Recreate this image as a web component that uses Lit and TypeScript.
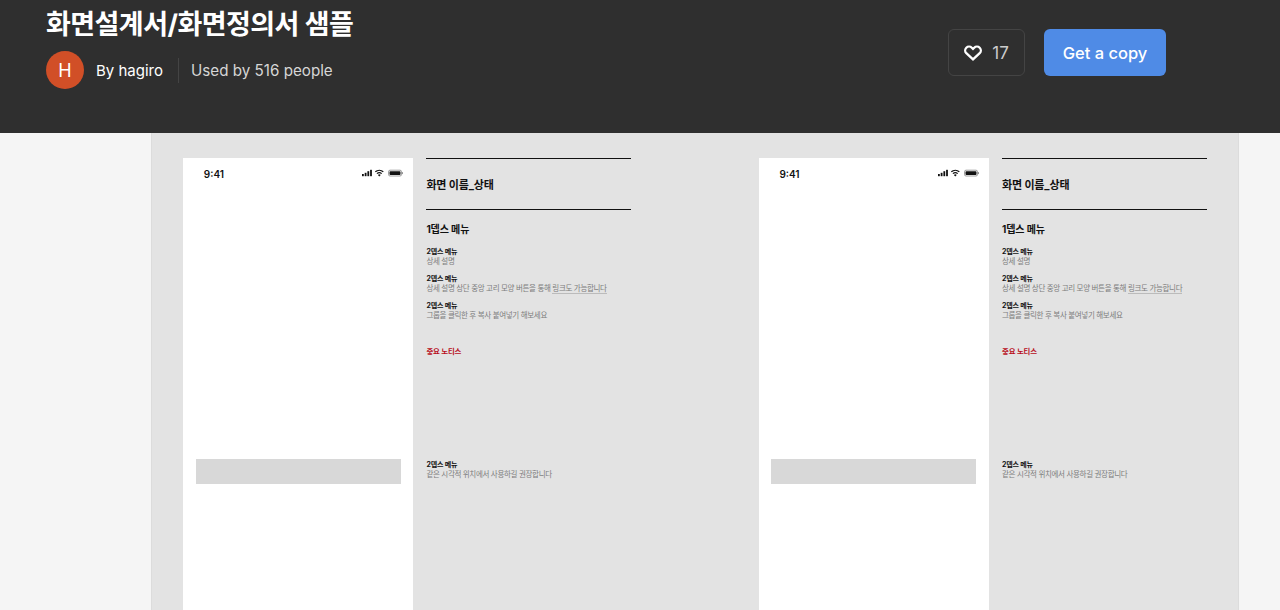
import { LitElement, html, css } from "lit";
import { customElement } from "lit/decorators.js";

@customElement("app-root")
export class AppRoot extends LitElement {
  static styles = css`
    :host { display: block; width: 1280px; height: 610px; overflow: hidden; background: #f5f5f5; font-family: Inter, "Noto Sans CJK KR", sans-serif; }
    .top { height: 133px; box-sizing: border-box; background: #2f2f2f; display: flex; justify-content: space-between; padding: 0 114px 0 46px; color: #fff; }
    h1 { margin: 0; font-size: 27px; line-height: 30px; font-weight: 700; letter-spacing: -0.55px; padding-top: 10px; white-space: nowrap; font-family: Inter, "Noto Sans CJK KR", sans-serif; }
    .meta { display: flex; align-items: center; margin-top: 11px; height: 38px; }
    .avatar { width: 38px; height: 38px; border-radius: 50%; background: #d14f27; display: flex; align-items: center; justify-content: center; font-size: 18px; font-weight: 400; }
    .by { margin-left: 12px; font-size: 15px; font-weight: 400; padding-right: 15px; }
    .used { border-left: 1px solid #444; height: 25px; line-height: 25px; padding-left: 12px; font-size: 15.2px; color: #d6d6d6; }
    .actions { display: flex; gap: 19px; padding-top: 29px; }
    .like { width: 77px; height: 47px; box-sizing: border-box; border: 1px solid #444; border-radius: 6px; display: flex; align-items: center; justify-content: center; gap: 10px; color: #ccc; font-size: 17px; }
    .like svg { display: block; }
    .copy { width: 122px; height: 47px; background: #4f8be6; border-radius: 6px; display: flex; align-items: center; justify-content: center; font-size: 16.5px; font-weight: 500; color: #fff; }
    .canvas { margin-left: 151px; width: 1088px; height: 477px; box-sizing: border-box; background: #e3e3e3; border: solid #dcdcdc; border-width: 0 1px; padding: 25px 0 0 31px; display: flex; gap: 127.6px; overflow: hidden; }
    .group { display: flex; gap: 13.4px; width: 448px; flex: none; }
    .phone { width: 230px; height: 500px; background: #fff; flex: none; box-sizing: border-box; padding: 9px 9px 0 12.8px; }
    .status { display: flex; justify-content: space-between; align-items: center; height: 13px; padding-left: 8px; font-size: 10px; font-weight: 600; color: #111; }
    .status svg { display: block; margin-top: -2px; }
    .bar { height: 25px; background: #d8d8d8; margin: 279px 0 0 0; width: 205px; }
    .notes { width: 204.6px; flex: none; color: #111; }
    .rule { height: 1px; background: #111; }
    .name { height: 50px; line-height: 52px; font-size: 11px; font-weight: 700; letter-spacing: -0.15px; }
    .d1 { font-size: 10px; font-weight: 700; line-height: 14px; margin: 12px 0 11px; letter-spacing: -0.1px; }
    .item { margin-bottom: 7px; }
    .d2 { font-size: 7px; font-weight: 700; line-height: 9px; letter-spacing: -0.15px; color: #111; }
    .desc { font-size: 7.5px; line-height: 11px; color: #7c7c7c; letter-spacing: -0.33px; white-space: nowrap; }
    .link { border-bottom: 1px solid #bbb; }
    .red { font-size: 7.4px; font-weight: 700; line-height: 10px; color: #b80d1a; margin-top: 26px; letter-spacing: -0.15px; }
    .last { margin-top: 103px; }
  `;

  private group() {
    return html`<div class="group">
      <div class="phone">
        <div class="status"><span>9:41</span>
          <svg width="43" height="8" viewBox="0 0 43 8">
            <rect x="1" y="5" width="1.8" height="2.2" fill="#111"/><rect x="3.7" y="3.8" width="1.8" height="3.4" fill="#111"/><rect x="6.4" y="2.2" width="1.8" height="5" fill="#111"/><rect x="9.1" y=".8" width="1.8" height="6.4" fill="#111"/>
            <path d="M14.3 2.8a6 6 0 0 1 8 0M15.9 4.6a3.7 3.7 0 0 1 4.8 0" fill="none" stroke="#111" stroke-width="1.2"/><path d="M18.3 7.4l-1.4-1.5a2 2 0 0 1 2.8 0z" fill="#111"/>
            <rect x="27.5" y="1.2" width="13" height="5.8" rx="1.5" fill="none" stroke="#777" stroke-width=".7"/><rect x="28.5" y="2.2" width="11" height="3.8" rx=".8" fill="#111"/><rect x="41" y="3.1" width=".9" height="2" fill="#888"/>
          </svg>
        </div>
        <div class="bar"></div>
      </div>
      <div class="notes">
        <div class="rule"></div>
        <div class="name">화면 이름_상태</div>
        <div class="rule"></div>
        <div class="d1">1뎁스 메뉴</div>
        <div class="item"><div class="d2">2뎁스 메뉴</div><div class="desc">상세 설명</div></div>
        <div class="item"><div class="d2">2뎁스 메뉴</div><div class="desc">상세 설명 상단 중앙 고리 모양 버튼을 통해 <span class="link">링크도 가능합니다</span></div></div>
        <div class="item"><div class="d2">2뎁스 메뉴</div><div class="desc">그룹을 클릭한 후 복사 붙여넣기 해보세요</div></div>
        <div class="red">중요 노티스</div>
        <div class="item last"><div class="d2">2뎁스 메뉴</div><div class="desc">같은 시각적 위치에서 사용하길 권장합니다</div></div>
      </div>
    </div>`;
  }

  render() {
    return html`
      <div class="top">
        <div>
          <h1>화면설계서/화면정의서 샘플</h1>
          <div class="meta">
            <div class="avatar">H</div>
            <div class="by">By hagiro</div>
            <div class="used">Used by 516 people</div>
          </div>
        </div>
        <div class="actions">
          <div class="like">
            <svg width="18" height="16" viewBox="0 0 18 16"><path d="M9 14.4 2.3 8.2a3.9 3.9 0 0 1 0-5.5 3.9 3.9 0 0 1 5.5 0L9 3.9l1.2-1.2a3.9 3.9 0 0 1 5.5 0 3.9 3.9 0 0 1 0 5.5z" fill="none" stroke="#fff" stroke-width="2.3"/></svg>
            <span>17</span>
          </div>
          <div class="copy">Get a copy</div>
        </div>
      </div>
      <div class="canvas">${this.group()}${this.group()}</div>
    `;
  }
}
